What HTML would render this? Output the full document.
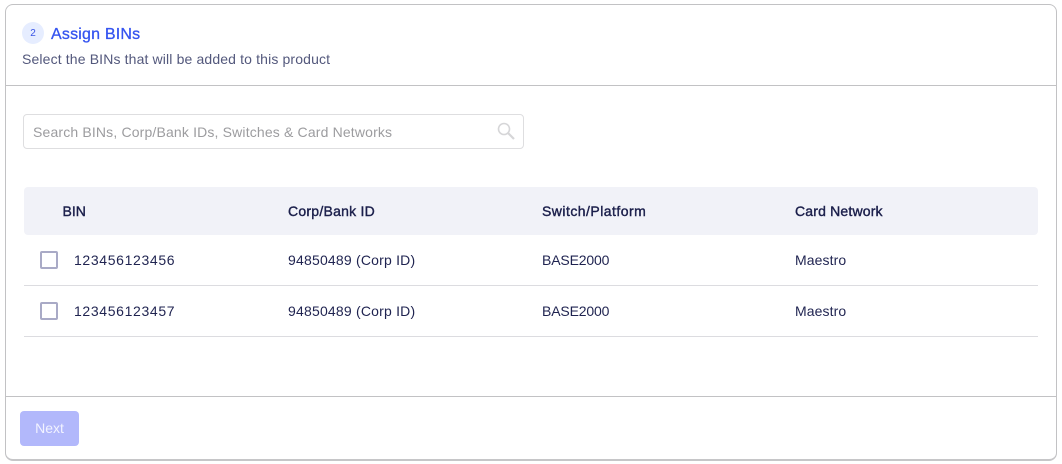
<!DOCTYPE html>
<html>
<head>
<meta charset="utf-8">
<style>
html,body{margin:0;padding:0;background:#fff;}
body{width:1062px;height:464px;position:relative;overflow:hidden;font-family:"Liberation Sans",sans-serif;}
.a{position:absolute;white-space:nowrap;}
.card{left:5px;top:4px;width:1050px;height:454px;border:1px solid #c2c2c4;border-bottom:2px solid #c6c6c8;border-radius:8px;box-sizing:content-box;}
.l{height:1px;}
.t{font-size:14px;line-height:20px;color:#1f2350;}
.h{font-size:14px;line-height:20px;color:#1b1f4b;font-weight:400;-webkit-text-stroke:.4px #1b1f4b;}
.cb{left:40px;width:14px;height:14px;border:2px solid #a9aac6;border-radius:2px;background:#fff;}
</style>
</head>
<body>
<div class="a card"></div>
<div class="a" style="left:22px;top:22px;width:22px;height:22px;border-radius:50%;background:#e6edff;"></div>
<div class="a" style="left:22px;top:23px;width:22px;text-align:center;font-size:10px;line-height:22px;color:#3a55e6;">2</div>
<div class="a" style="left:51px;top:24px;font-size:16px;line-height:21px;color:#3554f0;letter-spacing:.2px;-webkit-text-stroke:.3px #3554f0;">Assign BINs</div>
<div class="a" style="left:22px;top:49px;font-size:14px;line-height:20px;color:#53587c;letter-spacing:.14px;">Select the BINs that will be added to this product</div>
<div class="a l" style="left:6px;top:85px;width:1050px;background:#c2c2c4;"></div>
<div class="a" style="left:23px;top:114px;width:499px;height:33px;border:1px solid #dedee0;border-radius:4px;"></div>
<div class="a" style="left:33px;top:122px;font-size:14px;line-height:20px;color:#9c9c9f;letter-spacing:.16px;">Search BINs, Corp/Bank IDs, Switches &amp; Card Networks</div>
<svg class="a" style="left:496px;top:121px" width="20" height="20" viewBox="0 0 20 20"><circle cx="8" cy="8" r="5.5" fill="none" stroke="#d6d6d8" stroke-width="1.6"/><path d="M12 12l6 6" stroke="#d6d6d8" stroke-width="2.2" fill="none"/></svg>
<div class="a" style="left:24px;top:187px;width:1014px;height:48px;background:#f1f2f8;border-radius:4px;"></div>
<div class="a h" style="left:62.5px;top:201px;">BIN</div>
<div class="a h" style="left:288px;top:201px;letter-spacing:.25px;">Corp/Bank ID</div>
<div class="a h" style="left:542px;top:201px;letter-spacing:.47px;">Switch/Platform</div>
<div class="a h" style="left:795px;top:201px;letter-spacing:.18px;">Card Network</div>
<div class="a cb" style="top:251px"></div>
<div class="a t" style="left:74px;top:250px;letter-spacing:.65px;">123456123456</div>
<div class="a t" style="left:288px;top:250px;letter-spacing:.2px;">94850489 (Corp ID)</div>
<div class="a t" style="left:542px;top:250px;letter-spacing:-.15px;">BASE2000</div>
<div class="a t" style="left:795px;top:250px;letter-spacing:.1px;">Maestro</div>
<div class="a l" style="left:24px;top:285px;width:1014px;background:#dcdce0;"></div>
<div class="a cb" style="top:302px"></div>
<div class="a t" style="left:74px;top:301px;letter-spacing:.65px;">123456123457</div>
<div class="a t" style="left:288px;top:301px;letter-spacing:.2px;">94850489 (Corp ID)</div>
<div class="a t" style="left:542px;top:301px;letter-spacing:-.15px;">BASE2000</div>
<div class="a t" style="left:795px;top:301px;letter-spacing:.1px;">Maestro</div>
<div class="a l" style="left:24px;top:336px;width:1014px;background:#dcdce0;"></div>
<div class="a l" style="left:6px;top:396px;width:1050px;background:#c2c2c4;"></div>
<div class="a" style="left:20px;top:411px;width:59px;height:35px;background:#b2b8fb;border-radius:4px;color:#f2f3ff;font-size:14px;line-height:35px;text-align:center;">Next</div>
</body>
</html>
